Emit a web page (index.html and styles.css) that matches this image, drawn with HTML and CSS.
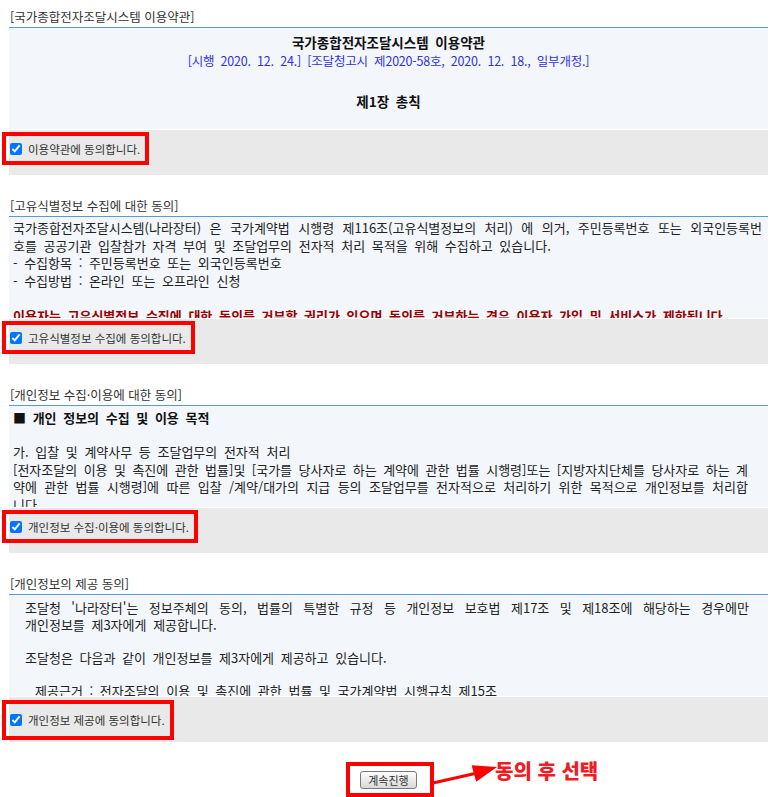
FILE: index.html
```html
<!DOCTYPE html>
<html lang="ko">
<head>
    <meta charset="UTF-8">
    <meta name="viewport" content="width=device-width, initial-scale=1.0">
    <title>국가종합전자조달시스템 이용약관 동의</title>
    <link rel="stylesheet" href="styles.css">
</head>
<body>
<div class="wrap">

    <div class="terms">
        <div class="terms-title">[국가종합전자조달시스템 이용약관]</div>
        <div class="terms-box box-center">
            <p class="doc-title">국가종합전자조달시스템 이용약관</p>
            <p class="doc-date">[시행 2020. 12. 24.] [조달청고시 제2020-58호, 2020. 12. 18., 일부개정.]</p>
            <p class="doc-chapter">제1장 총칙</p>
        </div>
        <div class="agree-bar">
            <label class="agree"><input type="checkbox" checked><span>이용약관에 동의합니다.</span></label>
        </div>
    </div>

    <div class="terms">
        <div class="terms-title">[고유식별정보 수집에 대한 동의]</div>
        <div class="terms-box box-info">
            <span class="jl">국가종합전자조달시스템(나라장터) 은 국가계약법 시행령 제116조(고유식별정보의 처리) 에 의거, 주민등록번호 또는 외국인등록번</span>
            <span class="ln">호를 공공기관 입찰참가 자격 부여 및 조달업무의 전자적 처리 목적을 위해 수집하고 있습니다.</span>
            <span class="ln">- 수집항목 : 주민등록번호 또는 외국인등록번호</span>
            <span class="ln">- 수집방법 : 온라인 또는 오프라인 신청</span>
            <span class="ln warn">이용자는 고유식별정보 수집에 대한 동의를 거부할 권리가 있으며 동의를 거부하는 경우 이용자 가입 및 서비스가 제한됩니다.</span>
        </div>
        <div class="agree-bar">
            <label class="agree"><input type="checkbox" checked><span>고유식별정보 수집에 동의합니다.</span></label>
        </div>
    </div>

    <div class="terms">
        <div class="terms-title">[개인정보 수집·이용에 대한 동의]</div>
        <div class="terms-box box-privacy">
            <p class="privacy-head">■ 개인 정보의 수집 및 이용 목적</p>
            <span class="ln">가. 입찰 및 계약사무 등 조달업무의 전자적 처리</span>
            <span class="jl">[전자조달의 이용 및 촉진에 관한 법률]및 [국가를 당사자로 하는 계약에 관한 법률 시행령]또는 [지방자치단체를 당사자로 하는 계</span>
            <span class="jl">약에 관한 법률 시행령]에 따른 입찰 /계약/대가의 지급 등의 조달업무를 전자적으로 처리하기 위한 목적으로 개인정보를 처리합</span>
            <span class="ln">니다.</span>
        </div>
        <div class="agree-bar">
            <label class="agree"><input type="checkbox" checked><span>개인정보 수집·이용에 동의합니다.</span></label>
        </div>
    </div>

    <div class="terms">
        <div class="terms-title">[개인정보의 제공 동의]</div>
        <div class="terms-box box-offer">
            <span class="jl">조달청 '나라장터'는 정보주체의 동의, 법률의 특별한 규정 등 개인정보 보호법 제17조 및 제18조에 해당하는 경우에만</span>
            <span class="ln">개인정보를 제3자에게 제공합니다.</span>
            <span class="ln gap">조달청은 다음과 같이 개인정보를 제3자에게 제공하고 있습니다.</span>
            <span class="ln gap sub">제공근거 : 전자조달의 이용 및 촉진에 관한 법률 및 국가계약법 시행규칙 제15조</span>
        </div>
        <div class="agree-bar">
            <label class="agree agree-tall"><input type="checkbox" checked><span>개인정보 제공에 동의합니다.</span></label>
        </div>
    </div>

    <div class="actions">
        <span class="btn-frame"><button class="btn-next" type="button">계속진행</button></span>
        <svg class="note-arrow" width="70" height="30" viewBox="0 0 70 30">
            <line x1="3" y1="21" x2="45" y2="11.5" stroke="#f00" stroke-width="3"/>
            <polygon points="67,5 46.2,19.7 41.6,3.3" fill="#f00"/>
        </svg>
        <span class="note-text">동의 후 선택</span>
    </div>

</div>
</body>
</html>
```

FILE: styles.css
```css
* {
    box-sizing: border-box;
}
body {
    margin: 0;
    font-family: "Noto Sans CJK KR", "Liberation Sans", sans-serif;
    color: #222;
    background: #fff;
}
p {
    margin: 0;
}
.wrap {
    padding: 0 7px 0 9px;
}
.terms + .terms {
    margin-top: 14px;
}
.terms-title {
    height: 28px;
    padding: 8px 0 0 1px;
    font-size: 12.5px;
    line-height: 17px;
    color: #333;
    border-bottom: 1px solid #5b9bd5;
}
.terms-box {
    height: 102px;
    overflow: hidden;
    background: #f3f6fb;
    border-bottom: 1px solid #fff;
    font-size: 13px;
    word-spacing: 3px;
}
.ln, .jl {
    display: block;
}
.jl {
    word-spacing: 0;
    text-align: justify;
    text-align-last: justify;
}

/* 이용약관 */
.box-center {
    text-align: center;
    padding-top: 4px;
}
.doc-title {
    font-size: 13.5px;
    font-weight: bold;
    line-height: 20px;
    color: #111;
}
.doc-date {
    font-size: 12.5px;
    letter-spacing: -0.2px;
    color: #3131e6;
    line-height: 18px;
}
.doc-chapter {
    margin-top: 21px;
    font-size: 13.5px;
    font-weight: bold;
    line-height: 20px;
    color: #111;
}

/* 고유식별정보 */
.box-info {
    padding: 2px 6px 0 4px;
    line-height: 17.5px;
}
.warn {
    margin-top: 17.5px;
    color: #900;
    font-weight: bold;
}

/* 개인정보 수집 */
.box-privacy {
    padding: 2px 20px 0 4px;
    line-height: 17.6px;
}
.privacy-head {
    font-size: 13px;
    font-weight: bold;
    line-height: 20px;
    margin-bottom: 15px;
    color: #111;
}

/* 개인정보 제공 */
.box-offer {
    padding: 5px 19px 0 16px;
    line-height: 16.5px;
}
.gap {
    margin-top: 16.5px;
}
.sub {
    padding-left: 10px;
}

/* 동의 체크 */
.agree-bar {
    height: 45px;
    background: #e9e9e9;
    padding-top: 2px;
}
.agree {
    display: inline-flex;
    align-items: center;
    height: 33px;
    margin-left: -7px;
    padding: 0 5px 0 4px;
    border: 4px solid #f00;
    font-size: 11.5px;
    color: #333;
}
.agree-tall {
    height: 40px;
    margin-top: 1px;
}
.agree input {
    margin: 0 6px 0 0;
    width: 12px;
    height: 12px;
}

/* 하단 버튼 */
.actions {
    position: relative;
    display: flex;
    justify-content: center;
    margin-top: 20px;
    height: 35px;
}
.btn-frame {
    display: block;
    margin-left: 3px;
    padding: 5px 13px 4px 10px;
    border: 4px solid #f00;
}
.btn-next {
    display: block;
    width: 57px;
    height: 18px;
    padding: 0;
    font-family: inherit;
    font-size: 11px;
    color: #333;
    border: 1px solid #7a7a7a;
    border-radius: 3px;
    background: linear-gradient(#fdfdfd, #d9d9d9);
    cursor: pointer;
}
.note-arrow {
    position: absolute;
    left: 421px;
    top: 0;
}
.note-text {
    position: absolute;
    left: 486px;
    top: -3px;
    font-size: 20px;
    font-weight: 900;
    line-height: 24px;
    color: #ee1c25;
}
```
